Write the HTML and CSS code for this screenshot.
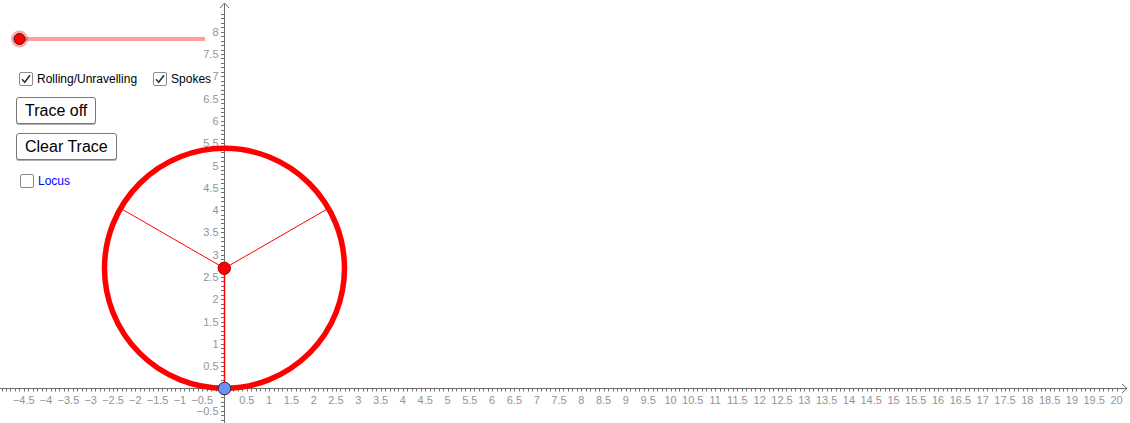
FILE: index.html
```html
<!DOCTYPE html>
<html>
<head>
<meta charset="utf-8">
<link rel="stylesheet" href="styles.css">
</head>
<body>
<div class="app">
  <svg id="graph" class="graph" width="1130" height="423" viewBox="0 0 1130 423" xmlns="http://www.w3.org/2000/svg">
    <g id="axes"></g>
    <!-- slider -->
    <line x1="20" y1="39" x2="205" y2="39" stroke="#ff9c9c" stroke-width="4"/>
    <circle cx="19.5" cy="39" r="8.5" fill="#ff0000" fill-opacity="0.35"/>
    <circle cx="19.5" cy="39" r="5.5" fill="#ff0000" stroke="#402020" stroke-width="1"/>
    <!-- wheel -->
    <circle cx="224.5" cy="268.3" r="120" fill="none" stroke="#ff0000" stroke-width="5.5"/>
    <line x1="224.5" y1="268.3" x2="121" y2="208.6" stroke="#ff0000" stroke-width="1"/>
    <line x1="224.5" y1="268.3" x2="328" y2="208.6" stroke="#ff0000" stroke-width="1"/>
    <line x1="224.5" y1="268.3" x2="224.5" y2="388.5" stroke="#ff0000" stroke-width="1.5"/>
    <circle cx="224.3" cy="268.3" r="6.2" fill="#ff0000" stroke="#aa0000" stroke-width="1"/>
    <circle cx="224.5" cy="388.5" r="6.3" fill="#6d91f5" stroke="#2a2a40" stroke-width="1"/>
  </svg>
  <div class="controls">
    <div class="check-row">
      <label class="check">
        <span class="box"><svg width="12" height="12" viewBox="0 0 12 12"><path d="M2 6.3 L4.7 9.2 L10 2.2" fill="none" stroke="#333" stroke-width="1.6"/></svg></span>
        <span class="check-text">Rolling/Unravelling</span>
      </label>
      <label class="check">
        <span class="box"><svg width="12" height="12" viewBox="0 0 12 12"><path d="M2 6.3 L4.7 9.2 L10 2.2" fill="none" stroke="#333" stroke-width="1.6"/></svg></span>
        <span class="check-text">Spokes</span>
      </label>
    </div>
    <button class="btn btn-first">Trace off</button>
    <button class="btn btn-second">Clear Trace</button>
    <label class="check locus">
      <span class="box"></span>
      <span class="check-text blue">Locus</span>
    </label>
  </div>
</div>
<script src="script.js"></script>
</body>
</html>
```

FILE: styles.css
```css
html, body {
  margin: 0;
  padding: 0;
  background: #ffffff;
}
.app {
  position: relative;
  width: 1130px;
  height: 423px;
  overflow: hidden;
  font-family: "Liberation Sans", Arial, sans-serif;
}
.graph {
  display: block;
}
.axis-label {
  font-family: "Liberation Sans", Arial, sans-serif;
  font-size: 11px;
  fill: #949494;
}
.controls {
  position: absolute;
  left: 16px;
  top: 71px;
  display: flex;
  flex-direction: column;
  align-items: flex-start;
}
.check-row {
  display: flex;
  align-items: center;
  gap: 16px;
  margin-left: 3px;
  height: 15px;
}
.check {
  display: flex;
  align-items: center;
  gap: 4px;
  font-size: 12px;
  color: #000;
}
.box {
  width: 12px;
  height: 12px;
  border: 1px solid #8a8a8a;
  border-radius: 2px;
  background: #fff;
  display: flex;
  align-items: center;
  justify-content: center;
}
.box svg {
  display: block;
}
.blue {
  color: #0000ff;
}
.btn {
  font-family: "Liberation Sans", Arial, sans-serif;
  font-size: 16px;
  color: #000;
  background: #fff;
  border: 1px solid #7a7a7a;
  border-radius: 3px;
  box-shadow: 0 1px 0 #b0b0b0;
  padding: 0 8px;
  height: 27px;
  line-height: 25px;
  cursor: default;
}
.btn-first {
  margin-top: 11px;
}
.btn-second {
  margin-top: 9px;
}
.locus {
  margin-top: 14px;
  margin-left: 4px;
}
```

FILE: script.js
```javascript
(function () {
  var NS = "http://www.w3.org/2000/svg";
  var g = document.getElementById("axes");
  var ox = 224.5, oy = 388.5, U = 44.6;
  var stroke = "#6e6e6e";

  function el(name, attrs, text) {
    var e = document.createElementNS(NS, name);
    for (var k in attrs) e.setAttribute(k, attrs[k]);
    if (text !== undefined) e.textContent = text;
    g.appendChild(e);
    return e;
  }
  function fmt(v) {
    var s = String(Math.abs(v));
    return v < 0 ? "\u2212" + s : s;
  }

  // x axis
  el("line", {x1: 0, y1: oy, x2: 1127, y2: oy, stroke: stroke, "stroke-width": 1});
  el("path", {d: "M1122 384 L1127 388.5 L1122 393", fill: "none", stroke: stroke, "stroke-width": 1});
  // y axis
  el("line", {x1: ox, y1: 3, x2: ox, y2: 423, stroke: stroke, "stroke-width": 1});
  el("path", {d: "M220 8 L224.5 3 L229 8", fill: "none", stroke: stroke, "stroke-width": 1});

  var i, p;
  // x ticks
  for (i = -60; i <= 205; i++) {
    p = ox + i * U / 10;
    if (p < 0 || p > 1120) continue;
    var px = Math.round(p) + 0.5;
    el("line", {x1: px, y1: oy, x2: px, y2: oy + 3, stroke: stroke, "stroke-width": 1});
  }
  // y ticks
  for (i = -10; i <= 85; i++) {
    p = oy - i * U / 10;
    if (p < 10 || p > 423) continue;
    var py = Math.round(p) + 0.5;
    el("line", {x1: ox - 3.5, y1: py, x2: ox, y2: py, stroke: stroke, "stroke-width": 1});
  }
  // x labels
  for (i = -9; i <= 40; i++) {
    if (i === 0) continue;
    var v = i / 2;
    el("text", {x: ox + v * U, y: oy + 15, "text-anchor": "middle", "class": "axis-label"}, fmt(v));
  }
  // y labels
  for (i = -1; i <= 16; i++) {
    if (i === 0) continue;
    var w = i / 2;
    el("text", {x: ox - 6, y: oy - w * U + 4, "text-anchor": "end", "class": "axis-label"}, fmt(w));
  }
})();
```
